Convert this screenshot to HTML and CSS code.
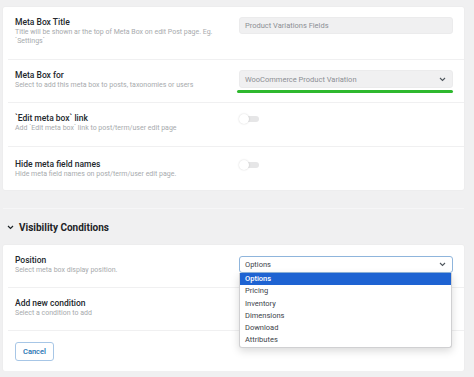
FILE: index.html
```html
<!doctype html>
<html lang="en">
  <head>
    <meta charset="UTF-8" />
    <meta name="viewport" content="width=device-width, initial-scale=1.0" />
    <title>Meta Box Settings</title>
    <link rel="stylesheet" href="styles.css">
  </head>
  <body>
    <div class="page">
      <div class="card">
        <div class="row row-tall">
          <div class="row-text">
            <div class="label">Meta Box Title</div>
            <div class="desc">Title will be shown ar the top of Meta Box on edit Post page. Eg.<br>`Settings`</div>
          </div>
          <div class="control">
            <div class="field">Product Variations Fields</div>
          </div>
        </div>

        <div class="row">
          <div class="row-text">
            <div class="label">Meta Box for</div>
            <div class="desc">Select to add this meta box to posts, taxonomies or users</div>
          </div>
          <div class="control">
            <div class="field select">
              <span>WooCommerce Product Variation</span>
              <svg class="chevron" width="7" height="5" viewBox="0 0 7 5"><polyline points="1,1 3.5,3.5 6,1" fill="none" stroke="#50575e" stroke-width="1.1"/></svg>
            </div>
            <div class="green-bar"></div>
          </div>
        </div>

        <div class="row row-tall">
          <div class="row-text">
            <div class="label">`Edit meta box` link</div>
            <div class="desc">Add `Edit meta box` link to post/term/user edit page</div>
          </div>
          <div class="control control-center">
            <div class="toggle"><span class="knob"></span></div>
          </div>
        </div>

        <div class="row last">
          <div class="row-text">
            <div class="label">Hide meta field names</div>
            <div class="desc">Hide meta field names on post/term/user edit page.</div>
          </div>
          <div class="control control-center">
            <div class="toggle"><span class="knob"></span></div>
          </div>
        </div>
      </div>

      <div class="section-head">
        <svg width="7" height="5" viewBox="0 0 7 5"><polyline points="1,1 3.5,3.5 6,1" fill="none" stroke="#1d2327" stroke-width="1.2"/></svg>
        <h2>Visibility Conditions</h2>
      </div>

      <div class="card">
        <div class="row">
          <div class="row-text">
            <div class="label">Position</div>
            <div class="desc">Select meta box display position.</div>
          </div>
          <div class="control">
            <div class="dropdown">
              <div class="field select open">
                <span>Options</span>
                <svg class="chevron" width="7" height="5" viewBox="0 0 7 5"><polyline points="1,1 3.5,3.5 6,1" fill="none" stroke="#50575e" stroke-width="1.1"/></svg>
              </div>
              <ul class="options">
                <li class="selected">Options</li>
                <li>Pricing</li>
                <li>Inventory</li>
                <li>Dimensions</li>
                <li>Download</li>
                <li>Attributes</li>
              </ul>
            </div>
          </div>
        </div>

        <div class="row">
          <div class="row-text">
            <div class="label">Add new condition</div>
            <div class="desc">Select a condition to add</div>
          </div>
          <div class="control"></div>
        </div>

        <div class="actions">
          <button class="btn">Cancel</button>
        </div>
      </div>
    </div>
  </body>
</html>
```

FILE: styles.css
```css
body {
  margin: 0;
  background: #f0f0f1;
  font-family: Roboto, 'Liberation Sans', Arial, sans-serif;
  color: #1d2327;
}

.page {
  width: 461px;
  padding: 7px 0 0 3px;
}

.card {
  background: #fff;
  border-radius: 2px;
  box-shadow: 0 0 2px rgba(0, 0, 0, 0.06);
}

.row {
  display: flex;
  margin-left: 5px;
  padding: 10px 11px 12px 7px;
  border-bottom: 1px solid #f0f0f1;
}

.row.row-tall {
  padding-bottom: 13px;
}

.row.last {
  border-bottom: none;
  padding: 12px 11px 11px 7px;
}

.row-text {
  flex: 0 0 224px;
}

.label {
  font-size: 8.5px;
  font-weight: 500;
  line-height: 11px;
  color: #23282d;
}

.desc {
  font-size: 7px;
  line-height: 9px;
  color: #a7aaad;
}

.control {
  flex: 1;
}

.control-center {
  display: flex;
  align-items: flex-start;
  padding-top: 2px;
}

.field {
  height: 17px;
  box-sizing: border-box;
  background: #f0f0f1;
  border: 1px solid #ebebec;
  border-radius: 3px;
  padding: 0 5px;
  font-size: 7.5px;
  line-height: 15px;
  color: #8c8f94;
}

.select {
  display: flex;
  justify-content: space-between;
  align-items: center;
  height: 18px;
}

.chevron {
  margin-right: 1px;
}

.green-bar {
  height: 3px;
  margin: 2px 0 -3px -2px;
  background: #2eb82e;
  border-radius: 2px;
}

.toggle {
  position: relative;
  width: 16px;
  height: 6px;
  margin: 1px 0 0 4px;
  background: #e6e6e7;
  border-radius: 3px;
}

.knob {
  position: absolute;
  left: -4px;
  top: -2px;
  width: 10px;
  height: 10px;
  background: #fff;
  border-radius: 50%;
  box-shadow: 0 0 2px rgba(0, 0, 0, 0.18);
}

.section-head {
  display: flex;
  align-items: center;
  gap: 5px;
  margin-top: 18px;
  height: 37px;
  padding-left: 4px;
  border-top: 1px solid #f6f6f7;
  box-sizing: border-box;
}

.section-head h2 {
  margin: 0;
  font-size: 10px;
  font-weight: 700;
  color: #1d2327;
}

.dropdown {
  position: relative;
  margin-top: 1px;
}

.select.open {
  height: 17px;
  background: #fff;
  border: 1px solid #8fb5dc;
  color: #3c434a;
}

.options {
  position: absolute;
  left: 0;
  right: 1px;
  top: 17px;
  margin: 0;
  padding: 0;
  list-style: none;
  background: #fff;
  border: 1px solid #d0d0d2;
  border-top: none;
  border-radius: 0 0 3px 3px;
  box-shadow: 0 3px 8px rgba(0, 0, 0, 0.15);
  z-index: 2;
}

.options li {
  height: 12.3px;
  padding-left: 5px;
  font-size: 7.5px;
  line-height: 12.3px;
  color: #3c434a;
}

.options li.selected {
  background: #1e63d2;
  color: #fff;
  font-weight: 500;
}

.actions {
  padding: 11px 12px 10px;
}

.btn {
  display: block;
  height: 19px;
  padding: 0 7px;
  background: #fff;
  border: 1px solid #a7c6e6;
  border-radius: 3px;
  font-family: inherit;
  font-size: 7.5px;
  font-weight: 500;
  color: #2271b1;
}
```
